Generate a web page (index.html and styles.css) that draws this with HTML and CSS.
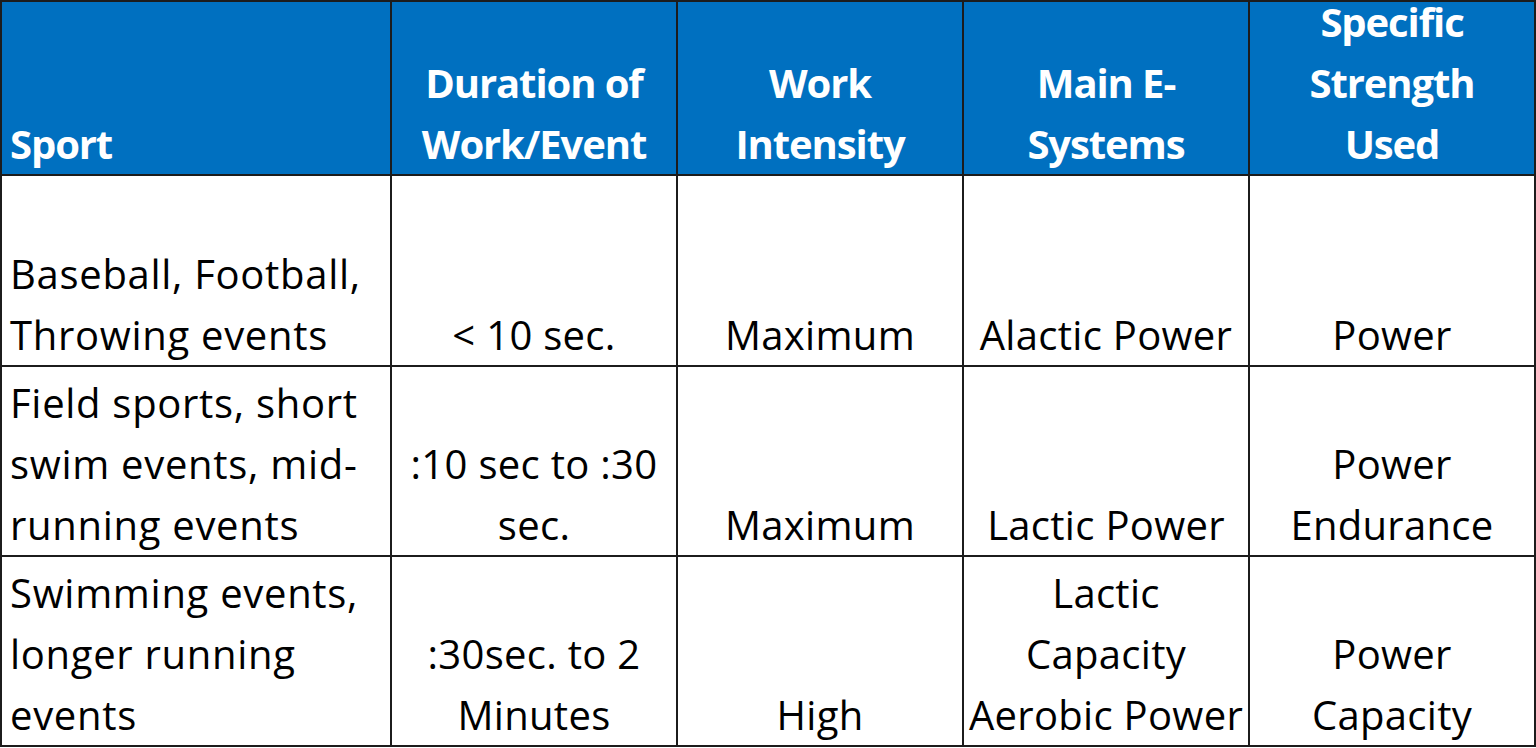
FILE: index.html
```html
<!DOCTYPE html>
<html>
<head>
<meta charset="utf-8">
<link rel="stylesheet" href="styles.css">
</head>
<body>
<div class="grid">
  <div class="cell head left">Sport</div>
  <div class="cell head">Duration of<br>Work/Event</div>
  <div class="cell head">Work<br>Intensity</div>
  <div class="cell head">Main E-<br>Systems</div>
  <div class="cell head">Specific<br>Strength<br>Used</div>

  <div class="cell left">Baseball, Football,<br>Throwing events</div>
  <div class="cell">&lt; 10 sec.</div>
  <div class="cell">Maximum</div>
  <div class="cell">Alactic Power</div>
  <div class="cell">Power</div>

  <div class="cell left">Field sports, short<br>swim events, mid-<br>running events</div>
  <div class="cell">:10 sec to :30<br>sec.</div>
  <div class="cell">Maximum</div>
  <div class="cell">Lactic Power</div>
  <div class="cell">Power<br>Endurance</div>

  <div class="cell left">Swimming events,<br>longer running<br>events</div>
  <div class="cell">:30sec. to 2<br>Minutes</div>
  <div class="cell">High</div>
  <div class="cell">Lactic<br>Capacity<br>Aerobic Power</div>
  <div class="cell">Power<br>Capacity</div>
</div>
</body>
</html>
```
FILE: styles.css
```css
html, body {
  margin: 0;
  padding: 0;
  background: #ffffff;
}
.grid {
  display: grid;
  grid-template-columns: 390px 286px 286px 286px 286px;
  grid-template-rows: 174px 191px 190px 190px;
  border-left: 2px solid #1c1c1c;
  border-top: 2px solid #1c1c1c;
  width: max-content;
  font-family: "Open Sans", "Noto Sans", sans-serif;
  font-size: 40px;
  line-height: 61px;
  letter-spacing: 0.3px;
  color: #000000;
}
.cell {
  border-right: 2px solid #1c1c1c;
  border-bottom: 2px solid #1c1c1c;
  display: flex;
  flex-direction: column;
  justify-content: flex-end;
  text-align: center;
  padding: 0 3px;
  overflow: hidden;
  white-space: nowrap;
}
.head {
  background: #0070c0;
  color: #ffffff;
  font-weight: 700;
  letter-spacing: -1.1px;
}
.left {
  text-align: left;
  padding-left: 8px;
  letter-spacing: 0.7px;
}
.head.left { letter-spacing: -1.1px; }
```
